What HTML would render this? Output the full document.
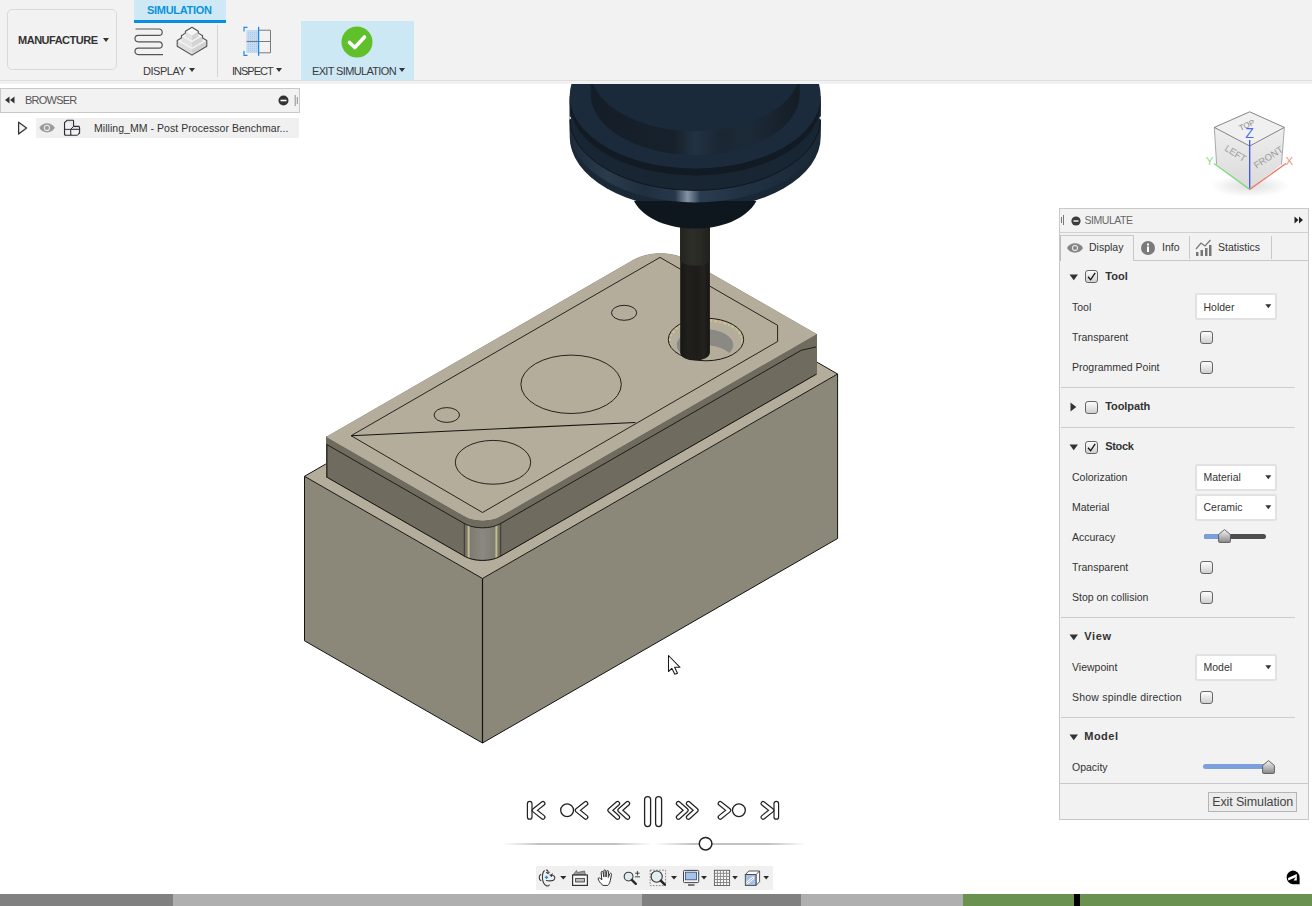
<!DOCTYPE html>
<html><head><meta charset="utf-8">
<style>
*{margin:0;padding:0;box-sizing:border-box}
html,body{width:1312px;height:906px;overflow:hidden;background:#fff;font-family:"Liberation Sans",sans-serif;color:#3c3c3c}
.abs{position:absolute}
#tb{position:absolute;left:0;top:0;width:1312px;height:81px;background:#f2f2f2;border-bottom:1px solid #dadada}
.lbl{position:absolute;font-size:10.5px;color:#3a3a3a;white-space:nowrap;letter-spacing:0}
.tri{position:absolute;width:0;height:0;border-left:3px solid transparent;border-right:3px solid transparent;border-top:4px solid #333}
#browser{position:absolute;left:0;top:88px;width:300px;height:25px;background:#f2f2f2;border:1px solid #c9c9c9}
#panel{position:absolute;left:1059px;top:209px;width:250px;height:611px;background:#f2f2f2;border:1px solid #c8c8c8}
.pl{position:absolute;font-size:11px;color:#3a3a3a;white-space:nowrap}
.pb{position:absolute;font-size:11px;font-weight:bold;color:#333;white-space:nowrap}
.cb{position:absolute;width:13px;height:13px;border:1px solid #666;border-radius:3px;background:linear-gradient(#fdfdfd,#cfcfcf)}
.dd{position:absolute;width:81px;height:27px;background:#fff;border:1px solid #dcdcdc}
.dd span{position:absolute;left:7px;top:7px;font-size:11px;color:#333}
.dd i{position:absolute;right:7px;top:11px;width:0;height:0;border-left:3px solid transparent;border-right:3px solid transparent;border-top:4px solid #333}
.sep{position:absolute;left:1px;width:234px;height:1px;background:#cfcfcf}
</style></head><body>
<svg class="abs" style="left:0;top:0" width="1312" height="906" viewBox="0 0 1312 906"><polygon points="304.5,476.3 482.5,578.5 482.5,743.0 304.5,640.8" fill="#8b8779"/>
<polygon points="482.5,578.5 837.6,374.0 837.6,538.5 482.5,743.0" fill="#8b8779"/>
<polygon points="482.5,578.5 837.6,374.0 659.6,271.7 304.5,476.3" fill="#b4ad9c"/>
<polyline points="304.5,476.3 482.5,578.5 837.6,374.0" fill="none" stroke="#141410" stroke-width="1"/>
<polyline points="304.5,476.3 304.5,640.8 482.5,743.0 837.6,538.5 837.6,374.0" fill="none" stroke="#141410" stroke-width="1"/>
<line x1="482.5" y1="578.5" x2="482.5" y2="743.0" stroke="#141410" stroke-width="1.2"/>
<polyline points="304.5,476.3 325.8,464.0" fill="none" stroke="#141410" stroke-width="1"/>
<polyline points="837.6,374.0 815.3,361.2" fill="none" stroke="#141410" stroke-width="1"/>
<polygon points="464.3,556.1 466.2,557.1 468.2,557.9 470.4,558.7 472.7,559.3 475.0,559.8 477.5,560.1 480.0,560.3 482.5,560.4 485.0,560.3 487.5,560.1 490.0,559.8 492.3,559.3 494.6,558.7 496.8,557.9 498.8,557.0 500.7,556.1 815.8,374.5 815.9,374.5 815.9,374.5 816.0,374.4 816.0,374.4 816.0,374.3 816.0,374.3 816.0,374.3 816.0,374.2 816.0,374.2 816.0,374.1 816.0,374.1 816.0,374.1 816.0,374.0 815.9,374.0 815.9,373.9 815.8,373.9 687.3,300.1 684.6,298.7 681.6,297.4 678.4,296.3 675.0,295.4 671.5,294.6 667.9,294.1 664.2,293.8 660.5,293.7 656.7,293.8 653.1,294.1 649.4,294.7 645.9,295.4 642.6,296.3 639.4,297.4 636.4,298.7 633.6,300.1 327.1,476.7 327.1,476.7 327.0,476.8 327.0,476.8 327.0,476.8 327.0,476.9 326.9,476.9 326.9,477.0 326.9,477.0 326.9,477.0 326.9,477.1 327.0,477.1 327.0,477.2 327.0,477.2 327.0,477.2 327.1,477.3 327.1,477.3" fill="#6f6b5f"/>
<polygon points="464.3,556.1 466.2,557.1 466.2,517.1 464.3,516.1" fill="#6f6b5f" stroke="#6f6b5f" stroke-width="0.6"/>
<polygon points="466.2,557.1 468.2,557.9 468.2,517.9 466.2,517.1" fill="#6f6b5f" stroke="#6f6b5f" stroke-width="0.6"/>
<polygon points="468.2,557.9 470.4,558.7 470.4,518.7 468.2,517.9" fill="#6f6b5f" stroke="#6f6b5f" stroke-width="0.6"/>
<polygon points="470.4,558.7 472.7,559.3 472.7,519.3 470.4,518.7" fill="#6f6b5f" stroke="#6f6b5f" stroke-width="0.6"/>
<polygon points="472.7,559.3 475.0,559.8 475.0,519.8 472.7,519.3" fill="#6f6b5f" stroke="#6f6b5f" stroke-width="0.6"/>
<polygon points="475.0,559.8 477.5,560.1 477.5,520.1 475.0,519.8" fill="#6f6b5f" stroke="#6f6b5f" stroke-width="0.6"/>
<polygon points="477.5,560.1 480.0,560.3 480.0,520.3 477.5,520.1" fill="#6f6b5f" stroke="#6f6b5f" stroke-width="0.6"/>
<polygon points="480.0,560.3 482.5,560.4 482.5,520.4 480.0,520.3" fill="#6f6b5f" stroke="#6f6b5f" stroke-width="0.6"/>
<polygon points="482.5,560.4 485.0,560.3 485.0,520.3 482.5,520.4" fill="#6f6b5f" stroke="#6f6b5f" stroke-width="0.6"/>
<polygon points="485.0,560.3 487.5,560.1 487.5,520.1 485.0,520.3" fill="#6f6b5f" stroke="#6f6b5f" stroke-width="0.6"/>
<polygon points="487.5,560.1 490.0,559.8 490.0,519.8 487.5,520.1" fill="#6f6b5f" stroke="#6f6b5f" stroke-width="0.6"/>
<polygon points="490.0,559.8 492.3,559.3 492.3,519.3 490.0,519.8" fill="#6f6b5f" stroke="#6f6b5f" stroke-width="0.6"/>
<polygon points="492.3,559.3 494.6,558.7 494.6,518.7 492.3,519.3" fill="#6f6b5f" stroke="#6f6b5f" stroke-width="0.6"/>
<polygon points="494.6,558.7 496.8,557.9 496.8,517.9 494.6,518.7" fill="#6f6b5f" stroke="#6f6b5f" stroke-width="0.6"/>
<polygon points="496.8,557.9 498.8,557.0 498.8,517.0 496.8,517.9" fill="#6f6b5f" stroke="#6f6b5f" stroke-width="0.6"/>
<polygon points="498.8,557.0 500.7,556.1 500.7,516.1 498.8,517.0" fill="#6f6b5f" stroke="#6f6b5f" stroke-width="0.6"/>
<polygon points="500.7,556.1 815.8,374.5 815.8,334.5 500.7,516.1" fill="#6f6b5f" stroke="#6f6b5f" stroke-width="0.6"/>
<polygon points="815.8,374.5 815.9,374.5 815.9,334.5 815.8,334.5" fill="#6f6b5f" stroke="#6f6b5f" stroke-width="0.6"/>
<polygon points="815.9,374.5 815.9,374.5 815.9,334.5 815.9,334.5" fill="#6f6b5f" stroke="#6f6b5f" stroke-width="0.6"/>
<polygon points="815.9,374.5 816.0,374.4 816.0,334.4 815.9,334.5" fill="#6f6b5f" stroke="#6f6b5f" stroke-width="0.6"/>
<polygon points="816.0,374.4 816.0,374.4 816.0,334.4 816.0,334.4" fill="#6f6b5f" stroke="#6f6b5f" stroke-width="0.6"/>
<polygon points="816.0,374.4 816.0,374.3 816.0,334.3 816.0,334.4" fill="#6f6b5f" stroke="#6f6b5f" stroke-width="0.6"/>
<polygon points="816.0,374.3 816.0,374.3 816.0,334.3 816.0,334.3" fill="#6f6b5f" stroke="#6f6b5f" stroke-width="0.6"/>
<polygon points="816.0,374.3 816.0,374.3 816.0,334.3 816.0,334.3" fill="#6f6b5f" stroke="#6f6b5f" stroke-width="0.6"/>
<polygon points="816.0,374.3 816.0,374.2 816.0,334.2 816.0,334.3" fill="#6f6b5f" stroke="#6f6b5f" stroke-width="0.6"/>
<polygon points="816.0,374.2 816.0,374.2 816.0,334.2 816.0,334.2" fill="#6f6b5f" stroke="#6f6b5f" stroke-width="0.6"/>
<polygon points="816.0,374.2 816.0,374.1 816.0,334.1 816.0,334.2" fill="#6f6b5f" stroke="#6f6b5f" stroke-width="0.6"/>
<polygon points="816.0,374.1 816.0,374.1 816.0,334.1 816.0,334.1" fill="#6f6b5f" stroke="#6f6b5f" stroke-width="0.6"/>
<polygon points="816.0,374.1 816.0,374.1 816.0,334.1 816.0,334.1" fill="#6f6b5f" stroke="#6f6b5f" stroke-width="0.6"/>
<polygon points="816.0,374.1 816.0,374.0 816.0,334.0 816.0,334.1" fill="#6f6b5f" stroke="#6f6b5f" stroke-width="0.6"/>
<polygon points="816.0,374.0 815.9,374.0 815.9,334.0 816.0,334.0" fill="#6f6b5f" stroke="#6f6b5f" stroke-width="0.6"/>
<polygon points="815.9,374.0 815.9,373.9 815.9,333.9 815.9,334.0" fill="#6f6b5f" stroke="#6f6b5f" stroke-width="0.6"/>
<polygon points="815.9,373.9 815.8,373.9 815.8,333.9 815.9,333.9" fill="#6f6b5f" stroke="#6f6b5f" stroke-width="0.6"/>
<polygon points="815.8,373.9 687.3,300.1 687.3,260.1 815.8,333.9" fill="#6f6b5f" stroke="#6f6b5f" stroke-width="0.6"/>
<polygon points="687.3,300.1 684.6,298.7 684.6,258.7 687.3,260.1" fill="#6f6b5f" stroke="#6f6b5f" stroke-width="0.6"/>
<polygon points="684.6,298.7 681.6,297.4 681.6,257.4 684.6,258.7" fill="#6f6b5f" stroke="#6f6b5f" stroke-width="0.6"/>
<polygon points="681.6,297.4 678.4,296.3 678.4,256.3 681.6,257.4" fill="#6f6b5f" stroke="#6f6b5f" stroke-width="0.6"/>
<polygon points="678.4,296.3 675.0,295.4 675.0,255.4 678.4,256.3" fill="#6f6b5f" stroke="#6f6b5f" stroke-width="0.6"/>
<polygon points="675.0,295.4 671.5,294.6 671.5,254.6 675.0,255.4" fill="#6f6b5f" stroke="#6f6b5f" stroke-width="0.6"/>
<polygon points="671.5,294.6 667.9,294.1 667.9,254.1 671.5,254.6" fill="#6f6b5f" stroke="#6f6b5f" stroke-width="0.6"/>
<polygon points="667.9,294.1 664.2,293.8 664.2,253.8 667.9,254.1" fill="#6f6b5f" stroke="#6f6b5f" stroke-width="0.6"/>
<polygon points="664.2,293.8 660.5,293.7 660.5,253.7 664.2,253.8" fill="#6f6b5f" stroke="#6f6b5f" stroke-width="0.6"/>
<polygon points="660.5,293.7 656.7,293.8 656.7,253.8 660.5,253.7" fill="#6f6b5f" stroke="#6f6b5f" stroke-width="0.6"/>
<polygon points="656.7,293.8 653.1,294.1 653.1,254.1 656.7,253.8" fill="#6f6b5f" stroke="#6f6b5f" stroke-width="0.6"/>
<polygon points="653.1,294.1 649.4,294.7 649.4,254.7 653.1,254.1" fill="#6f6b5f" stroke="#6f6b5f" stroke-width="0.6"/>
<polygon points="649.4,294.7 645.9,295.4 645.9,255.4 649.4,254.7" fill="#6f6b5f" stroke="#6f6b5f" stroke-width="0.6"/>
<polygon points="645.9,295.4 642.6,296.3 642.6,256.3 645.9,255.4" fill="#6f6b5f" stroke="#6f6b5f" stroke-width="0.6"/>
<polygon points="642.6,296.3 639.4,297.4 639.4,257.4 642.6,256.3" fill="#6f6b5f" stroke="#6f6b5f" stroke-width="0.6"/>
<polygon points="639.4,297.4 636.4,298.7 636.4,258.7 639.4,257.4" fill="#6f6b5f" stroke="#6f6b5f" stroke-width="0.6"/>
<polygon points="636.4,298.7 633.6,300.1 633.6,260.1 636.4,258.7" fill="#6f6b5f" stroke="#6f6b5f" stroke-width="0.6"/>
<polygon points="633.6,300.1 327.1,476.7 327.1,436.7 633.6,260.1" fill="#6f6b5f" stroke="#6f6b5f" stroke-width="0.6"/>
<polygon points="327.1,476.7 327.1,476.7 327.1,436.7 327.1,436.7" fill="#6f6b5f" stroke="#6f6b5f" stroke-width="0.6"/>
<polygon points="327.1,476.7 327.0,476.8 327.0,436.8 327.1,436.7" fill="#6f6b5f" stroke="#6f6b5f" stroke-width="0.6"/>
<polygon points="327.0,476.8 327.0,476.8 327.0,436.8 327.0,436.8" fill="#6f6b5f" stroke="#6f6b5f" stroke-width="0.6"/>
<polygon points="327.0,476.8 327.0,476.8 327.0,436.8 327.0,436.8" fill="#6f6b5f" stroke="#6f6b5f" stroke-width="0.6"/>
<polygon points="327.0,476.8 327.0,476.9 327.0,436.9 327.0,436.8" fill="#6f6b5f" stroke="#6f6b5f" stroke-width="0.6"/>
<polygon points="327.0,476.9 326.9,476.9 326.9,436.9 327.0,436.9" fill="#6f6b5f" stroke="#6f6b5f" stroke-width="0.6"/>
<polygon points="326.9,476.9 326.9,477.0 326.9,437.0 326.9,436.9" fill="#6f6b5f" stroke="#6f6b5f" stroke-width="0.6"/>
<polygon points="326.9,477.0 326.9,477.0 326.9,437.0 326.9,437.0" fill="#6f6b5f" stroke="#6f6b5f" stroke-width="0.6"/>
<polygon points="326.9,477.0 326.9,477.0 326.9,437.0 326.9,437.0" fill="#6f6b5f" stroke="#6f6b5f" stroke-width="0.6"/>
<polygon points="326.9,477.0 326.9,477.1 326.9,437.1 326.9,437.0" fill="#6f6b5f" stroke="#6f6b5f" stroke-width="0.6"/>
<polygon points="326.9,477.1 327.0,477.1 327.0,437.1 326.9,437.1" fill="#6f6b5f" stroke="#6f6b5f" stroke-width="0.6"/>
<polygon points="327.0,477.1 327.0,477.2 327.0,437.2 327.0,437.1" fill="#6f6b5f" stroke="#6f6b5f" stroke-width="0.6"/>
<polygon points="327.0,477.2 327.0,477.2 327.0,437.2 327.0,437.2" fill="#6f6b5f" stroke="#6f6b5f" stroke-width="0.6"/>
<polygon points="327.0,477.2 327.0,477.2 327.0,437.2 327.0,437.2" fill="#6f6b5f" stroke="#6f6b5f" stroke-width="0.6"/>
<polygon points="327.0,477.2 327.1,477.3 327.1,437.3 327.0,437.2" fill="#6f6b5f" stroke="#6f6b5f" stroke-width="0.6"/>
<polygon points="327.1,477.3 327.1,477.3 327.1,437.3 327.1,437.3" fill="#6f6b5f" stroke="#6f6b5f" stroke-width="0.6"/>
<polygon points="327.1,477.3 464.3,556.1 464.3,516.1 327.1,437.3" fill="#6f6b5f" stroke="#6f6b5f" stroke-width="0.6"/>
<polygon points="464.3,516.1 466.2,517.1 468.2,517.9 470.4,518.7 472.7,519.3 475.0,519.8 477.5,520.1 480.0,520.3 482.5,520.4 485.0,520.3 487.5,520.1 490.0,519.8 492.3,519.3 494.6,518.7 496.8,517.9 498.8,517.0 500.7,516.1 815.8,334.5 815.9,334.5 815.9,334.5 816.0,334.4 816.0,334.4 816.0,334.3 816.0,334.3 816.0,334.3 816.0,334.2 816.0,334.2 816.0,334.1 816.0,334.1 816.0,334.1 816.0,334.0 815.9,334.0 815.9,333.9 815.8,333.9 687.3,260.1 684.6,258.7 681.6,257.4 678.4,256.3 675.0,255.4 671.5,254.6 667.9,254.1 664.2,253.8 660.5,253.7 656.7,253.8 653.1,254.1 649.4,254.7 645.9,255.4 642.6,256.3 639.4,257.4 636.4,258.7 633.6,260.1 327.1,436.7 327.1,436.7 327.0,436.8 327.0,436.8 327.0,436.8 327.0,436.9 326.9,436.9 326.9,437.0 326.9,437.0 326.9,437.0 326.9,437.1 327.0,437.1 327.0,437.2 327.0,437.2 327.0,437.2 327.1,437.3 327.1,437.3" fill="#b4ad9c"/>
<defs><linearGradient id="cyl" x1="0" x2="1" y1="0" y2="0"><stop offset="0" stop-color="#6f6d62"/><stop offset="0.07" stop-color="#77756a"/><stop offset="0.12" stop-color="#c9c48e"/><stop offset="0.17" stop-color="#7e7c72"/><stop offset="0.5" stop-color="#8a8880"/><stop offset="0.83" stop-color="#7e7c72"/><stop offset="0.88" stop-color="#c9c48e"/><stop offset="0.93" stop-color="#77756a"/><stop offset="1" stop-color="#6f6d62"/></linearGradient></defs>
<polygon points="464.3,523.5 466.2,524.5 468.2,525.3 470.4,526.1 472.7,526.7 475.0,527.2 477.5,527.5 480.0,527.7 482.5,527.8 485.0,527.7 487.5,527.5 490.0,527.2 492.3,526.7 494.6,526.1 496.8,525.3 498.8,524.4 500.7,523.5 500.7,556.1 498.8,557.0 496.8,557.9 494.6,558.7 492.3,559.3 490.0,559.8 487.5,560.1 485.0,560.3 482.5,560.4 480.0,560.3 477.5,560.1 475.0,559.8 472.7,559.3 470.4,558.7 468.2,557.9 466.2,557.1 464.3,556.1" fill="url(#cyl)"/>
<line x1="464.3" y1="523.5" x2="464.3" y2="556.1" stroke="#3a382f" stroke-width="1"/>
<line x1="500.7" y1="523.5" x2="500.7" y2="556.1" stroke="#3a382f" stroke-width="1"/>
<polyline points="326.9,477.0 326.9,477.0 326.9,477.1 327.0,477.1 327.0,477.2 327.0,477.2 327.0,477.2 327.1,477.3 327.1,477.3 464.3,556.1 466.2,557.1 468.2,557.9 470.4,558.7 472.7,559.3 475.0,559.8 477.5,560.1 480.0,560.3 482.5,560.4 485.0,560.3 487.5,560.1 490.0,559.8 492.3,559.3 494.6,558.7 496.8,557.9 498.8,557.0 500.7,556.1 815.8,374.5 815.9,374.5 815.9,374.5 816.0,374.4 816.0,374.4 816.0,374.3 816.0,374.3 816.0,374.3 816.0,374.2" fill="none" stroke="#141410" stroke-width="1"/>
<polyline points="326.9,444.4 326.9,444.4 326.9,444.5 327.0,444.5 327.0,444.6 327.0,444.6 327.0,444.6 327.1,444.7 327.1,444.7 464.3,523.5 466.2,524.5 468.2,525.3 470.4,526.1 472.7,526.7 475.0,527.2 477.5,527.5 480.0,527.7 482.5,527.8 485.0,527.7 487.5,527.5 490.0,527.2 492.3,526.7 494.6,526.1 496.8,525.3 498.8,524.4 500.7,523.5 801.2,350.3 815.8,347.0 815.9,347.0 815.9,347.0 816.0,347.0 816.0,347.0 816.0,346.9 816.0,346.9 816.0,346.9 816.0,346.9" fill="none" stroke="#141410" stroke-width="0.9"/>
<line x1="326.9" y1="477.0" x2="326.9" y2="444.4" stroke="#141410" stroke-width="1"/>
<polygon points="464.3,516.1 466.2,517.1 468.2,517.9 470.4,518.7 472.7,519.3 475.0,519.8 477.5,520.1 480.0,520.3 482.5,520.4 485.0,520.3 487.5,520.1 490.0,519.8 492.3,519.3 494.6,518.7 496.8,517.9 498.8,517.0 500.7,516.1 815.8,334.5 815.9,334.5 815.9,334.5 816.0,334.4 816.0,334.4 816.0,334.3 816.0,334.3 816.0,334.3 816.0,334.2 816.0,334.2 816.0,334.1 816.0,334.1 816.0,334.1 816.0,334.0 815.9,334.0 815.9,333.9 815.8,333.9 687.3,260.1 684.6,258.7 681.6,257.4 678.4,256.3 675.0,255.4 671.5,254.6 667.9,254.1 664.2,253.8 660.5,253.7 656.7,253.8 653.1,254.1 649.4,254.7 645.9,255.4 642.6,256.3 639.4,257.4 636.4,258.7 633.6,260.1 327.1,436.7 327.1,436.7 327.0,436.8 327.0,436.8 327.0,436.8 327.0,436.9 326.9,436.9 326.9,437.0 326.9,437.0 326.9,437.0 326.9,437.1 327.0,437.1 327.0,437.2 327.0,437.2 327.0,437.2 327.1,437.3 327.1,437.3" fill="#b4ad9c"/>
<polygon points="482.5,512.5 777.6,341.5 777.6,325.3 660.0,257.4 351.1,435.7" fill="none" stroke="#141410" stroke-width="0.9"/>
<line x1="351.1" y1="435.7" x2="635.4" y2="422.5" stroke="#141410" stroke-width="1.1"/>
<ellipse cx="446.8" cy="415" rx="12.7" ry="7.4" fill="none" stroke="#141410" stroke-width="0.9"/>
<ellipse cx="571.1" cy="384.3" rx="50.2" ry="29.2" fill="none" stroke="#141410" stroke-width="0.9"/>
<ellipse cx="493" cy="462.3" rx="37.7" ry="21.9" fill="none" stroke="#141410" stroke-width="0.9"/>
<ellipse cx="624.1" cy="312.8" rx="12.6" ry="7.5" fill="none" stroke="#141410" stroke-width="0.9"/>
<defs><clipPath id="e1"><ellipse cx="705" cy="345" rx="28.5" ry="16"/></clipPath><clipPath id="eo"><ellipse cx="706" cy="339.5" rx="37.7" ry="21.3"/></clipPath></defs>
<ellipse cx="706" cy="339.5" rx="37.7" ry="21.3" fill="#b4ad9c"/>
<g clip-path="url(#eo)"><ellipse cx="706" cy="340.6" rx="36.4" ry="20.2" fill="none" stroke="#c9c290" stroke-width="2.6" stroke-dasharray="3,2,2,2"/></g>
<g clip-path="url(#eo)"><ellipse cx="706" cy="342.6" rx="35.2" ry="18.8" fill="#b4ad9c"/></g>
<g clip-path="url(#e1)"><ellipse cx="705" cy="345" rx="28.5" ry="16" fill="#8b8983"/><ellipse cx="705" cy="361.3" rx="28.5" ry="16" fill="#b4ad9c"/></g>
<ellipse cx="706" cy="339.5" rx="37.7" ry="21.3" fill="none" stroke="#1c1a14" stroke-width="1"/>
<defs><linearGradient id="shaft" x1="0" x2="1"><stop offset="0" stop-color="#181714"/><stop offset="0.25" stop-color="#201f1b"/><stop offset="0.55" stop-color="#1d1c18"/><stop offset="0.8" stop-color="#23221e"/><stop offset="1" stop-color="#161512"/></linearGradient><linearGradient id="shaft2" x1="0" x2="1"><stop offset="0" stop-color="#232320"/><stop offset="0.4" stop-color="#2e2e29"/><stop offset="0.7" stop-color="#2a2a25"/><stop offset="1" stop-color="#20201c"/></linearGradient></defs>
<path d="M 680.2 226 L 680.2 352.5 A 14.85 8 0 0 0 709.9 352.5 L 709.9 226 Z" fill="url(#shaft)"/>
<path d="M 680.2 226 L 680.2 259.7 A 14.85 6 0 0 0 709.9 259.7 L 709.9 226 Z" fill="url(#shaft2)"/>
<defs><linearGradient id="hl" x1="0" x2="1"><stop offset="0" stop-color="#1c2b3a"/><stop offset="0.15" stop-color="#2a3b4c"/><stop offset="0.3" stop-color="#1f2f40"/><stop offset="0.42" stop-color="#26384a"/><stop offset="0.47" stop-color="#8594a4"/><stop offset="0.52" stop-color="#2a3c50"/><stop offset="0.7" stop-color="#203142"/><stop offset="1" stop-color="#1a2836"/></linearGradient><linearGradient id="wl" x1="0" x2="1"><stop offset="0" stop-color="#151e28"/><stop offset="0.4" stop-color="#17212b"/><stop offset="0.5" stop-color="#223244"/><stop offset="0.62" stop-color="#1a2632"/><stop offset="0.75" stop-color="#1c2a38"/><stop offset="1" stop-color="#141d26"/></linearGradient><clipPath id="vp"><rect x="0" y="84" width="1312" height="822"/></clipPath></defs>
<g clip-path="url(#vp)">
<path d="M 569.7 96 L 569.7 137 A 125.5 72.4 0 0 0 820.7 137 L 820.7 96 Z" fill="#1a2735"/>
<path d="M 634 201 C 644 220 670 228.6 695.2 228.6 C 720 228.6 746 220 756.4 201 Z" fill="#0f171e"/>
<path d="M 569.7 118 A 125.5 72.4 0 0 0 820.7 118 L 820.7 130 A 125.5 72.4 0 0 1 569.7 130 Z" fill="url(#hl)"/>
<path d="M 569.7 96 A 125.5 72.4 0 0 0 820.7 96 L 820.7 118 A 125.5 72.4 0 0 1 569.7 118 Z" fill="#182533"/>
<path d="M 569.7 96 A 125.5 72.4 0 0 0 820.7 96 L 820.7 103 A 125.5 72.4 0 0 1 569.7 103 Z" fill="#121b24"/>
<path d="M 569.7 118 A 125.5 72.4 0 0 0 820.7 118" fill="none" stroke="#0c1218" stroke-width="0.8"/>
<ellipse cx="695.2" cy="96" rx="125.5" ry="72.4" fill="#1c2b3b"/>
<path d="M 590.7 70.7 A 104.5 60.3 0 0 0 799.7 70.7 L 799.7 94.7 A 104.5 60.3 0 0 1 590.7 94.7 Z" fill="url(#wl)"/>
<ellipse cx="695.2" cy="70.7" rx="104.5" ry="60.3" fill="#1b2a3a"/>
<path d="M 569.5 116 L 571.2 118 L 569.5 120 Z M 820.9 116 L 819.2 118 L 820.9 120 Z" fill="#fff"/>
</g>
</svg>
<div id="tb"></div>
<!-- toolbar -->
<div class="abs" style="left:0;top:80px;width:1312px;height:1px;background:#dedede"></div>
<div class="abs" style="left:0;top:81px;width:1312px;height:3px;background:#f2f2f2"></div>
<div class="abs" style="left:7px;top:9px;width:110px;height:61px;border:1px solid #d9d9d9;border-radius:5px;background:#f2f2f2"></div>
<div class="abs" style="left:18px;top:34.69px;font-size:11px;line-height:11px;letter-spacing:-0.49px;color:#333;white-space:nowrap;font-weight:bold">MANUFACTURE</div>
<div class="tri" style="left:103px;top:38px"></div>
<div class="abs" style="left:134px;top:0;width:92px;height:20px;background:#cfe8f6"></div>
<div class="abs" style="left:134px;top:20px;width:92px;height:3px;background:#0a8fdc"></div>
<div class="abs" style="left:147px;top:4.69px;font-size:11px;line-height:11px;letter-spacing:-0.3px;color:#0b93d8;white-space:nowrap;font-weight:bold">SIMULATION</div>
<svg class="abs" style="left:130px;top:22px" width="85" height="38" viewBox="130 22 85 38">
 <path d="M135.5 29 H159 A3.2 3.2 0 0 1 159 35.4 H138.2 A3.2 3.2 0 0 0 138.2 41.8 H159 A3.2 3.2 0 0 1 159 48.2 H138.2 A3.2 3.2 0 0 0 138.2 54.6 H163" fill="none" stroke="#555" stroke-width="1.2"/>
 <path d="M177.2 40.6 L192 49 L206.8 40.6 L206.8 46.3 L192 55.1 L177.2 46.3 Z" fill="#dedede"/>
 <path d="M192 49 L206.8 40.6 L206.8 46.3 L192 55.1 Z" fill="#d2d2d2"/>
 <path d="M177.2 40.6 L192 32 L206.8 40.6 L192 49 Z" fill="#f4f4f4"/>
 <path d="M181.4 36 L192 42.2 L202.6 36 L202.6 38.3 L192 44.5 L181.4 38.3 Z" fill="#e0e0e0"/>
 <path d="M181.4 36 L192 29.8 L202.6 36 L192 42.2 Z" fill="#f4f4f4"/>
 <path d="M181.4 36 L192 42.2 L192 47.6 L181.4 41.4 Z" fill="#e2e2e2"/>
 <path d="M192 42.2 L202.6 36 L202.6 41.4 L192 47.6 Z" fill="#d4d4d4"/>
 <path d="M185.4 31.2 L192 35.2 L192 40.7 L185.4 36.8 Z" fill="#e2e2e2"/>
 <path d="M192 35.2 L198.4 31.2 L198.4 36.8 L192 40.7 Z" fill="#d4d4d4"/>
 <path d="M185.4 31.2 L192 27.2 L198.4 31.2 L192 35.2 Z" fill="#f6f6f6"/>
 <path d="M192 27.2 L198.4 31.2 L198.4 33.1 L202.6 35.8 L202.6 38.1 L206.8 40.4 L206.8 46.3 L192 55.1 L177.2 46.3 L177.2 40.4 L181.4 38.1 L181.4 35.8 L185.4 33.1 L185.4 31.2 Z" fill="none" stroke="#505050" stroke-width="1.1" stroke-linejoin="round"/>
</svg>
<div class="abs" style="left:143px;top:65.69px;font-size:11px;line-height:11px;letter-spacing:-0.45px;color:#3a3a3a;white-space:nowrap">DISPLAY</div>
<div class="tri" style="left:189px;top:68px"></div>
<div class="abs" style="left:217px;top:25px;width:1px;height:52px;background:#d4d4d4"></div>
<svg class="abs" style="left:240px;top:24px" width="36" height="36" viewBox="240 24 36 36">
 <defs><pattern id="dots" width="2" height="2" patternUnits="userSpaceOnUse"><rect width="2" height="2" fill="#c4dcf2"/><rect width="1" height="1" fill="#a9c9ea"/></pattern></defs>
 <rect x="246.5" y="30.2" width="12" height="22.6" fill="url(#dots)"/>
 <path d="M246.5 41.5 H270.5 M258.6 30.2 H270.5 V52.8 H258.6" fill="none" stroke="#7a7a7a" stroke-width="1"/>
 <path d="M247.5 27.3 H244 V31.5 M247.5 55.3 H244 V51" fill="none" stroke="#1e88e5" stroke-width="1.2"/>
 <path d="M258.6 26.8 V55.8" stroke="#1e88e5" stroke-width="1.3"/>
</svg>
<div class="abs" style="left:232px;top:65.69px;font-size:11px;line-height:11px;letter-spacing:-1.0px;color:#3a3a3a;white-space:nowrap">INSPECT</div>
<div class="tri" style="left:276px;top:68px"></div>
<div class="abs" style="left:301px;top:21px;width:113px;height:59px;background:#cde8f5"></div>
<svg class="abs" style="left:340px;top:26px" width="34" height="32" viewBox="0 0 34 32">
 <circle cx="17" cy="16" r="15.5" fill="#5fc02a"/>
 <path d="M9.5 16.5 L14.8 21.5 L24.5 11" fill="none" stroke="#fff" stroke-width="3.6" stroke-linecap="round" stroke-linejoin="round"/>
</svg>
<div class="abs" style="left:312px;top:65.69px;font-size:11px;line-height:11px;letter-spacing:-0.65px;color:#3a3a3a;white-space:nowrap">EXIT SIMULATION</div>
<div class="tri" style="left:399px;top:68px"></div>

<!-- browser -->
<div id="browser"></div>
<svg class="abs" style="left:4px;top:96px" width="12" height="8" viewBox="0 0 12 8"><path d="M1 4 L5.5 0.5 V7.5 Z M6 4 L10.5 0.5 V7.5 Z" fill="#333"/></svg>
<div class="abs" style="left:25px;top:95.19px;font-size:11px;line-height:11px;letter-spacing:-0.77px;color:#555;white-space:nowrap">BROWSER</div>
<svg class="abs" style="left:277px;top:94px" width="22" height="13" viewBox="0 0 22 13"><circle cx="6.5" cy="6.5" r="5" fill="#333"/><rect x="3.5" y="5.7" width="6" height="1.6" fill="#fff"/><path d="M18.2 1 V12 M20.3 3 V10" stroke="#777" stroke-width="0.8"/></svg>
<div class="abs" style="left:36px;top:118px;width:263px;height:20px;background:#f0f0f0"></div>
<svg class="abs" style="left:10px;top:114px" width="80" height="28" viewBox="10 114 80 28">
 <path d="M18.6 122.2 L26.6 128.1 L18.6 134.1 Z" fill="#f4f4f4" stroke="#333" stroke-width="1.25" stroke-linejoin="round"/>
 <path d="M39.3 127.8 C42.5 121.6 51.6 121.6 54.8 127.8 C51.6 134 42.5 134 39.3 127.8 Z" fill="#9b9b9b"/>
 <circle cx="46.9" cy="127.9" r="3.1" fill="#f0f0f0"/><circle cx="46.9" cy="127.9" r="2.1" fill="#9b9b9b"/>
 <path d="M64.5 122.6 L67 120.3 H73.2 L73.6 121.4 V126.4 H79.1 L79.6 128.1 V133 L77.2 135.1 H65 L64.5 134.6 Z" fill="#e4e4ea" stroke="#2e2e2e" stroke-width="1.1" stroke-linejoin="round"/>
 <path d="M70.7 135.1 V129.3 L73.6 126.4 M64.5 129.3 H70.7 M70.7 129.3 H79.6" fill="none" stroke="#2e2e2e" stroke-width="1"/>
 <path d="M66 123 H70.5 V128.5 H66 Z M66 130.5 H70 V134.5 H66 Z M72 130.5 H78 V134.5 H72 Z" fill="#f3f3f6"/>
</svg>
<div class="abs" style="left:94px;top:123.11px;font-size:10.5px;line-height:10.5px;letter-spacing:0.05px;color:#333;white-space:nowrap">Milling_MM - Post Processor Benchmar...</div>

<!-- viewcube -->
<svg class="abs" style="left:1190px;top:95px" width="122" height="105" viewBox="1190 95 122 105">
 <defs><radialGradient id="vcs" cx="0.5" cy="0.5" r="0.5"><stop offset="0" stop-color="#000" stop-opacity="0.13"/><stop offset="1" stop-color="#000" stop-opacity="0"/></radialGradient>
 <linearGradient id="vcl" x1="0" y1="0" x2="0" y2="1"><stop offset="0" stop-color="#f3f3f3"/><stop offset="1" stop-color="#dadada"/></linearGradient></defs>
 <ellipse cx="1250" cy="186" rx="40" ry="11" fill="url(#vcs)"/>
 <path d="M1214.3 127.4 L1249.7 111.8 L1284.4 127.4 L1281.5 164.5 L1249.7 189.4 L1216.6 164.5 Z" fill="url(#vcl)"/>
 <path d="M1214.3 127.4 L1249.7 111.8 L1284.4 127.4 L1249.7 146 Z" fill="#f0f0f0"/>
 <path d="M1214.3 127.4 L1249.7 111.8 L1284.4 127.4 L1249.7 146 Z" fill="none" stroke="#555" stroke-width="0.7"/>
 <path d="M1214.3 127.4 L1216.6 164.5 M1284.4 127.4 L1281.5 164.5" fill="none" stroke="#888" stroke-width="0.7"/>
 <text font-size="9.5" fill="#9a9a9a" transform="translate(1224 150) rotate(32)" font-family="Liberation Sans">LEFT</text>
 <text font-size="9.5" fill="#9a9a9a" transform="translate(1256.5 169) rotate(-33)" font-family="Liberation Sans">FRONT</text>
 <text font-size="8" fill="#8a8a8a" transform="translate(1240.5 131) rotate(-24)" font-family="Liberation Sans">TOP</text>
 <text x="1245.2" y="138" font-size="14" fill="#4b6cf0" font-family="Liberation Sans">Z</text>
 <path d="M1249.7 140 V189.4" stroke="#3d52ee" stroke-width="1.3"/>
 <path d="M1249.7 189.4 L1214 163.5" stroke="#80d880" stroke-width="1.3"/>
 <path d="M1249.7 189.4 L1286 163.5" stroke="#f07866" stroke-width="1.3"/>
 <text x="1205.8" y="165" font-size="11.5" fill="#8ae08a" font-family="Liberation Sans">Y</text>
 <text x="1285.6" y="165" font-size="11.5" fill="#f0907e" font-family="Liberation Sans">X</text>
</svg>

<!-- simulate panel -->

<div class="abs" style="left:1059px;top:208px;width:250px;height:612px;background:#f2f2f2;border:1px solid #c9c9c9"></div>
<div class="abs" style="left:1060px;top:232px;width:248px;height:1px;background:#d0d0d0"></div>
<div class="abs" style="left:1061px;top:217px;width:1px;height:6px;background:#777"></div><div class="abs" style="left:1063px;top:215px;width:1px;height:10px;background:#777"></div>
<svg class="abs" style="left:1070.5px;top:215.5px" width="10" height="10" viewBox="0 0 10 10"><circle cx="5" cy="5" r="4.6" fill="#3a3a3a"/><rect x="2.5" y="4.3" width="5" height="1.4" fill="#fff"/></svg>
<div class="abs" style="left:1084.5px;top:214.91px;font-size:10.5px;line-height:10.5px;font-weight:normal;color:#666;white-space:nowrap;letter-spacing:-0.45px">SIMULATE</div>
<svg class="abs" style="left:1294px;top:216px" width="10" height="8" viewBox="0 0 10 8"><path d="M0.5 0.5 L4.5 4 L0.5 7.5 Z M5 0.5 L9 4 L5 7.5 Z" fill="#222"/></svg>
<div class="abs" style="left:1060px;top:260px;width:248px;height:1px;background:#c8c8c8"></div>
<div class="abs" style="left:1060px;top:235px;width:74px;height:26px;background:#f2f2f2;border:1px solid #c8c8c8;border-bottom:none;border-left-color:#bbb"></div>
<div class="abs" style="left:1189px;top:236px;width:1px;height:23px;background:#c8c8c8"></div>
<div class="abs" style="left:1271px;top:236px;width:1px;height:23px;background:#c8c8c8"></div>
<svg class="abs" style="left:1066px;top:242px" width="18" height="12" viewBox="0 0 18 12"><path d="M1 6 C4 -0.2 14 -0.2 17 6 C14 12.2 4 12.2 1 6 Z" fill="#858585"/><circle cx="9" cy="6" r="3" fill="#f2f2f2"/><circle cx="9" cy="6" r="2" fill="#858585"/></svg>
<div class="abs" style="left:1089px;top:242.21px;font-size:10.5px;line-height:10.5px;font-weight:normal;color:#333;white-space:nowrap;letter-spacing:0px">Display</div>
<svg class="abs" style="left:1140px;top:240px" width="16" height="16" viewBox="0 0 16 16"><circle cx="8" cy="8" r="7" fill="#7a7a7a"/><rect x="7" y="6.5" width="2" height="5.5" fill="#fff"/><rect x="7" y="3.5" width="2" height="2" fill="#fff"/></svg>
<div class="abs" style="left:1162px;top:242.21px;font-size:10.5px;line-height:10.5px;font-weight:normal;color:#333;white-space:nowrap;letter-spacing:0px">Info</div>
<svg class="abs" style="left:1195px;top:239px" width="17" height="18" viewBox="0 0 17 18"><path d="M1 17 V13 H3.5 V17 Z M5.5 17 V11 H8 V17 Z M10 17 V9 H12.5 V17 Z M14 17 V6 H16.5 V17 Z" fill="#777"/><path d="M1 10 L6 4 L10 7 L15.5 1" fill="none" stroke="#777" stroke-width="1.2"/></svg>
<div class="abs" style="left:1218px;top:242.21px;font-size:10.5px;line-height:10.5px;font-weight:normal;color:#333;white-space:nowrap;letter-spacing:0px">Statistics</div>
<svg class="abs" style="left:1069px;top:273.5px" width="10" height="7" viewBox="0 0 10 7"><path d="M0.5 0.5 H9 L4.75 6.3 Z" fill="#333"/></svg>
<div class="cb" style="left:1085px;top:269.5px"></div>
<svg class="abs" style="left:1085px;top:269.5px" width="13" height="13" viewBox="0 0 13 13"><path d="M3 6.8 L5.6 9.8 L10.2 2.8" fill="none" stroke="#111" stroke-width="1.3"/></svg>
<div class="abs" style="left:1105.3px;top:271.49px;font-size:11px;line-height:11px;font-weight:bold;color:#333;white-space:nowrap;letter-spacing:0px">Tool</div>
<div class="abs" style="left:1072px;top:302.01px;font-size:10.5px;line-height:10.5px;font-weight:normal;color:#333;white-space:nowrap;letter-spacing:0px">Tool</div>
<div class="abs" style="left:1195px;top:293.1px;width:82px;height:27px;background:#fff;border:2px solid #e2e2e2;border-radius:2px"></div>
<div class="abs" style="left:1203.5px;top:301.71px;font-size:10.5px;line-height:10.5px;font-weight:normal;color:#333;white-space:nowrap;letter-spacing:0px">Holder</div>
<svg class="abs" style="left:1265px;top:304.1px" width="7" height="5" viewBox="0 0 7 5"><path d="M0.3 0.3 H6.3 L3.3 4.3 Z" fill="#333"/></svg>
<div class="abs" style="left:1072px;top:332.01px;font-size:10.5px;line-height:10.5px;font-weight:normal;color:#333;white-space:nowrap;letter-spacing:0px">Transparent</div>
<div class="cb" style="left:1200px;top:330.5px"></div>
<div class="abs" style="left:1072px;top:362.01px;font-size:10.5px;line-height:10.5px;font-weight:normal;color:#333;white-space:nowrap;letter-spacing:0px">Programmed Point</div>
<div class="cb" style="left:1200px;top:360.5px"></div>
<div class="abs" style="left:1061px;top:387px;width:234px;height:1px;background:#cdcdcd"></div>
<svg class="abs" style="left:1070px;top:402px" width="7" height="10" viewBox="0 0 7 10"><path d="M0.5 0.5 V9.5 L6.3 5 Z" fill="#333"/></svg>
<div class="cb" style="left:1085px;top:400.5px"></div>
<div class="abs" style="left:1105.3px;top:401.49px;font-size:11px;line-height:11px;font-weight:bold;color:#333;white-space:nowrap;letter-spacing:-0.1px">Toolpath</div>
<div class="abs" style="left:1061px;top:427px;width:234px;height:1px;background:#cdcdcd"></div>
<svg class="abs" style="left:1069px;top:443.5px" width="10" height="7" viewBox="0 0 10 7"><path d="M0.5 0.5 H9 L4.75 6.3 Z" fill="#333"/></svg>
<div class="cb" style="left:1085px;top:440.5px"></div>
<svg class="abs" style="left:1085px;top:440.5px" width="13" height="13" viewBox="0 0 13 13"><path d="M3 6.8 L5.6 9.8 L10.2 2.8" fill="none" stroke="#111" stroke-width="1.3"/></svg>
<div class="abs" style="left:1105.3px;top:441.49px;font-size:11px;line-height:11px;font-weight:bold;color:#333;white-space:nowrap;letter-spacing:-0.37px">Stock</div>
<div class="abs" style="left:1072px;top:472.11px;font-size:10.5px;line-height:10.5px;font-weight:normal;color:#333;white-space:nowrap;letter-spacing:0px">Colorization</div>
<div class="abs" style="left:1195px;top:463.5px;width:82px;height:27px;background:#fff;border:2px solid #e2e2e2;border-radius:2px"></div>
<div class="abs" style="left:1203.5px;top:472.11px;font-size:10.5px;line-height:10.5px;font-weight:normal;color:#333;white-space:nowrap;letter-spacing:0px">Material</div>
<svg class="abs" style="left:1265px;top:474.5px" width="7" height="5" viewBox="0 0 7 5"><path d="M0.3 0.3 H6.3 L3.3 4.3 Z" fill="#333"/></svg>
<div class="abs" style="left:1072px;top:502.11px;font-size:10.5px;line-height:10.5px;font-weight:normal;color:#333;white-space:nowrap;letter-spacing:0px">Material</div>
<div class="abs" style="left:1195px;top:493.5px;width:82px;height:27px;background:#fff;border:2px solid #e2e2e2;border-radius:2px"></div>
<div class="abs" style="left:1203.5px;top:502.11px;font-size:10.5px;line-height:10.5px;font-weight:normal;color:#333;white-space:nowrap;letter-spacing:0px">Ceramic</div>
<svg class="abs" style="left:1265px;top:504.5px" width="7" height="5" viewBox="0 0 7 5"><path d="M0.3 0.3 H6.3 L3.3 4.3 Z" fill="#333"/></svg>
<div class="abs" style="left:1072px;top:532.11px;font-size:10.5px;line-height:10.5px;font-weight:normal;color:#333;white-space:nowrap;letter-spacing:0px">Accuracy</div>
<div class="abs" style="left:1204px;top:534px;width:62px;height:5px;border-radius:3px;background:#4d4d4d"></div>
<div class="abs" style="left:1204px;top:534px;width:20px;height:5px;border-radius:3px 0 0 3px;background:#7b9fdc"></div>
<svg class="abs" style="left:1218px;top:529px" width="14" height="14" viewBox="0 0 14 14"><defs><linearGradient id="hg" x1="0" y1="0" x2="0" y2="1"><stop offset="0" stop-color="#f5f5f5"/><stop offset="1" stop-color="#8a8a8a"/></linearGradient></defs><path d="M0.6 12.5 V5.5 L6.5 0.6 L12.4 5.5 V12.5 Q12.4 13.4 11.5 13.4 H1.5 Q0.6 13.4 0.6 12.5 Z" fill="url(#hg)" stroke="#555" stroke-width="0.9"/></svg>
<div class="abs" style="left:1072px;top:562.11px;font-size:10.5px;line-height:10.5px;font-weight:normal;color:#333;white-space:nowrap;letter-spacing:0px">Transparent</div>
<div class="cb" style="left:1200px;top:560.5px"></div>
<div class="abs" style="left:1072px;top:592.11px;font-size:10.5px;line-height:10.5px;font-weight:normal;color:#333;white-space:nowrap;letter-spacing:0px">Stop on collision</div>
<div class="cb" style="left:1200px;top:590.5px"></div>
<div class="abs" style="left:1061px;top:617px;width:234px;height:1px;background:#cdcdcd"></div>
<svg class="abs" style="left:1069px;top:633.5px" width="10" height="7" viewBox="0 0 10 7"><path d="M0.5 0.5 H9 L4.75 6.3 Z" fill="#333"/></svg>
<div class="abs" style="left:1084.3px;top:631.49px;font-size:11px;line-height:11px;font-weight:bold;color:#333;white-space:nowrap;letter-spacing:0.67px">View</div>
<div class="abs" style="left:1072px;top:662.11px;font-size:10.5px;line-height:10.5px;font-weight:normal;color:#333;white-space:nowrap;letter-spacing:0px">Viewpoint</div>
<div class="abs" style="left:1195px;top:653.5px;width:82px;height:27px;background:#fff;border:2px solid #e2e2e2;border-radius:2px"></div>
<div class="abs" style="left:1203.5px;top:662.11px;font-size:10.5px;line-height:10.5px;font-weight:normal;color:#333;white-space:nowrap;letter-spacing:0px">Model</div>
<svg class="abs" style="left:1265px;top:664.5px" width="7" height="5" viewBox="0 0 7 5"><path d="M0.3 0.3 H6.3 L3.3 4.3 Z" fill="#333"/></svg>
<div class="abs" style="left:1072px;top:692.11px;font-size:10.5px;line-height:10.5px;font-weight:normal;color:#333;white-space:nowrap;letter-spacing:0.22px">Show spindle direction</div>
<div class="cb" style="left:1200px;top:690.5px"></div>
<div class="abs" style="left:1061px;top:717px;width:234px;height:1px;background:#cdcdcd"></div>
<svg class="abs" style="left:1069px;top:733.5px" width="10" height="7" viewBox="0 0 10 7"><path d="M0.5 0.5 H9 L4.75 6.3 Z" fill="#333"/></svg>
<div class="abs" style="left:1084.3px;top:731.49px;font-size:11px;line-height:11px;font-weight:bold;color:#333;white-space:nowrap;letter-spacing:0.47px">Model</div>
<div class="abs" style="left:1072px;top:762.11px;font-size:10.5px;line-height:10.5px;font-weight:normal;color:#333;white-space:nowrap;letter-spacing:0px">Opacity</div>
<div class="abs" style="left:1203px;top:764px;width:65px;height:5px;border-radius:3px;background:#7b9fdc"></div>
<svg class="abs" style="left:1262px;top:760px" width="14" height="14" viewBox="0 0 14 14"><path d="M0.6 12.5 V5.5 L6.5 0.6 L12.4 5.5 V12.5 Q12.4 13.4 11.5 13.4 H1.5 Q0.6 13.4 0.6 12.5 Z" fill="url(#hg)" stroke="#555" stroke-width="0.9"/></svg>
<div class="abs" style="left:1060px;top:783px;width:248px;height:1px;background:#c8c8c8"></div>
<div class="abs" style="left:1208px;top:792px;width:89px;height:20px;background:#ececec;border:1px solid #b5b5b5"></div>
<div class="abs" style="left:1212.2px;top:796.42px;font-size:12.5px;line-height:12.5px;font-weight:normal;color:#444;white-space:nowrap;letter-spacing:-0.12px">Exit Simulation</div>
<!-- playback -->
<svg class="abs" style="left:0;top:780px" width="1312" height="126" viewBox="0 780 1312 126">
 <defs>
  <linearGradient id="sl" x1="0" x2="1"><stop offset="0" stop-color="#888" stop-opacity="0"/><stop offset="0.25" stop-color="#777" stop-opacity="0.9"/><stop offset="0.75" stop-color="#777" stop-opacity="0.9"/><stop offset="1" stop-color="#888" stop-opacity="0"/></linearGradient>
  <g id="lhalf">
   <!-- |< -->
   <rect x="527.4" y="801.4" width="4.6" height="17.8" rx="2.3" fill="#fff" stroke="#222" stroke-width="1.2"/>
   <path d="M542.9 803.5 L534.3 810.3 L542.9 817.2" fill="none" stroke="#222" stroke-width="5.2" stroke-linecap="round" stroke-linejoin="round"/>
   <path d="M542.9 803.5 L534.3 810.3 L542.9 817.2" fill="none" stroke="#fff" stroke-width="2.8" stroke-linecap="round" stroke-linejoin="round"/>
   <!-- O< -->
   <circle cx="567.1" cy="810.3" r="6.4" fill="#fff" stroke="#222" stroke-width="1.3"/>
   <path d="M585.8 803.5 L577.3 810.3 L585.8 817.2" fill="none" stroke="#222" stroke-width="5.2" stroke-linecap="round" stroke-linejoin="round"/>
   <path d="M585.8 803.5 L577.3 810.3 L585.8 817.2" fill="none" stroke="#fff" stroke-width="2.8" stroke-linecap="round" stroke-linejoin="round"/>
   <!-- << -->
   <path d="M617.6 803.5 L609.9 810.3 L617.6 817.2" fill="none" stroke="#222" stroke-width="5.2" stroke-linecap="round" stroke-linejoin="round"/>
   <path d="M617.6 803.5 L609.9 810.3 L617.6 817.2" fill="none" stroke="#fff" stroke-width="2.8" stroke-linecap="round" stroke-linejoin="round"/>
   <path d="M627.6 803.5 L619.9 810.3 L627.6 817.2" fill="none" stroke="#222" stroke-width="5.2" stroke-linecap="round" stroke-linejoin="round"/>
   <path d="M627.6 803.5 L619.9 810.3 L627.6 817.2" fill="none" stroke="#fff" stroke-width="2.8" stroke-linecap="round" stroke-linejoin="round"/>
  </g>
 </defs>
 <use href="#lhalf"/>
 <use href="#lhalf" transform="translate(1306 0) scale(-1 1)"/>
 <rect x="644.6" y="796.6" width="6" height="30" rx="3" fill="#fff" stroke="#222" stroke-width="1.3"/>
 <rect x="655.6" y="796.6" width="6" height="30" rx="3" fill="#fff" stroke="#222" stroke-width="1.3"/>
 <rect x="502" y="843.5" width="150" height="1" fill="url(#sl)"/>
 <rect x="654" y="843.5" width="153" height="1" fill="url(#sl)"/>
 <circle cx="705.6" cy="843.7" r="6.3" fill="#fff" stroke="#222" stroke-width="1.5"/>
 <!-- nav bar -->
 <rect x="536" y="866" width="237" height="24" fill="#f0f0f0"/>
 <!-- orbit -->
 <g fill="none" stroke="#3a3a3a" stroke-width="1.1">
  <path d="M544.6 870.5 C541.5 873 541.5 883 546 885.5 C548 886.6 549.5 885.6 549.2 884.5"/>
  <path d="M541.2 874.2 C538.5 875.5 538.5 879.5 541.2 880.8"/>
  <path d="M546 870.3 C547.5 869.8 548.2 871 548 872.5"/>
  <path d="M549.5 875 C554 874.5 555.6 877 554.5 879.2 C553.5 881 550 881.2 546 880.5"/>
  <path d="M546.2 872.2 L548 873.5 L549.5 871.8 M550.5 875.8 L551.8 874.5 L551.2 876.8"/>
 </g>
 <path d="M544.8 877.4 h3.4 M546.5 875.7 v3.4" stroke="#1a8fe0" stroke-width="1.2"/>
 <path d="M560.2 876 h6.2 l-3.1 3.6z" fill="#2a2a2a"/>
 <!-- look at -->
 <path d="M573 875 L576.5 870.5 L577.5 872.5 L584.5 871 L585.5 875 Z" fill="#9a9a9a" stroke="#555" stroke-width="0.7"/>
 <rect x="572.6" y="875" width="14.8" height="10.4" fill="#fbfbfb" stroke="#333" stroke-width="1.2"/>
 <rect x="575.6" y="878.4" width="8.8" height="3.6" fill="#b8bec2" stroke="#444" stroke-width="0.9"/>
 <!-- pan hand -->
 <path d="M603 885.4 C600 883 598.5 880.5 598.2 879 C598 877.6 599.6 877.4 600.6 878.6 L601.8 880 L601.2 872.5 C601.1 871.2 602.9 871 603.1 872.3 L603.8 877 L603.9 870.8 C603.9 869.6 605.8 869.6 605.8 870.8 L606 877 L606.8 871.4 C607 870.3 608.7 870.4 608.6 871.6 L608.3 877.4 L609.8 873.8 C610.3 872.8 611.8 873.2 611.5 874.4 L610.3 880.5 C609.8 883 608.7 884.6 607.8 885.4 Z" fill="#fff" stroke="#2e2e2e" stroke-width="1"/>
 <path d="M603.9 872 v5 M606 872 v5 M608.3 872.5 v4.5" stroke="#666" stroke-width="0.6"/>
 <!-- zoom + -->
 <circle cx="628.6" cy="876.6" r="4.4" fill="#dfecef" stroke="#3a3a3a" stroke-width="1.1"/>
 <path d="M631.8 879.8 L635.8 883.8" stroke="#2a2a2a" stroke-width="2.4" stroke-linecap="round"/>
 <path d="M637.4 871 v4.4 M635.2 873.2 h4.4 M635 876.8 h5" stroke="#333" stroke-width="0.9"/>
 <!-- fit -->
 <rect x="650.2" y="870.2" width="15.4" height="15.4" fill="none" stroke="#666" stroke-width="0.8" stroke-dasharray="1.6,1.4"/>
 <circle cx="656.7" cy="876.6" r="5.6" fill="#e2eef0" stroke="#333" stroke-width="1.1"/>
 <path d="M660.8 880.7 L664.8 884.6" stroke="#222" stroke-width="2.4" stroke-linecap="round"/>
 <path d="M671 876 h6 l-3 3.5z" fill="#2a2a2a"/>
 <!-- display -->
 <rect x="683.5" y="870.4" width="15.2" height="12.2" rx="1" fill="#f4f4f4" stroke="#444" stroke-width="1"/>
 <rect x="685.6" y="872.2" width="11" height="7.6" fill="#a9c3e6" stroke="#2a4a8a" stroke-width="0.8"/>
 <path d="M688 885 h6.5" stroke="#444" stroke-width="1.4"/>
 <path d="M701 876 h6 l-3 3.5z" fill="#2a2a2a"/>
 <!-- grid -->
 <rect x="714.4" y="870.3" width="15.2" height="15.2" fill="#fafafa" stroke="#555" stroke-width="0.9"/>
 <path d="M717.4 870.3 v15.2 M720.4 870.3 v15.2 M723.5 870.3 v15.2 M726.6 870.3 v15.2 M714.4 873.3 h15.2 M714.4 876.4 h15.2 M714.4 879.5 h15.2 M714.4 882.5 h15.2" stroke="#8a8a8a" stroke-width="1"/>
 <path d="M732.2 876 h5.6 l-2.8 3.4z" fill="#2a2a2a"/>
 <!-- viewports -->
 <path d="M745.3 874.6 L748.8 871 H759.6 V881.8 L756 885.4" fill="#fff" stroke="#444" stroke-width="0.9"/>
 <path d="M745.3 874.6 H756 L759.6 871 M756 874.6 V885.4" fill="none" stroke="#444" stroke-width="0.9"/>
 <rect x="745.3" y="874.6" width="10.7" height="10.8" fill="#a6c2e8" stroke="#444" stroke-width="0.9"/>
 <path d="M747.6 882.5 L753 878" stroke="#fff" stroke-width="2.6" stroke-linecap="round"/>
 <path d="M747.6 882.5 L753 878" stroke="#555" stroke-width="0.5" stroke-linecap="round"/>
 <path d="M763.4 876 h5.6 l-2.8 3.4z" fill="#2a2a2a"/>
 <!-- gauge icon -->
 <path d="M1292.7 870.5 A6.9 6.9 0 0 1 1299.6 877.4 V884.2 H1292.7 A6.9 6.9 0 0 1 1292.7 870.5 Z" fill="#000"/>
 <path d="M1288 878 L1296.8 874 V880.6 H1293.5 L1295.8 877.3 L1288.3 880.6 Z" fill="#fff"/>
</svg>
<!-- status bar -->
<div class="abs" style="left:0;top:894px;width:173px;height:12px;background:#808080"></div>
<div class="abs" style="left:173px;top:894px;width:469px;height:12px;background:#afafaf"></div>
<div class="abs" style="left:642px;top:894px;width:159px;height:12px;background:#808080"></div>
<div class="abs" style="left:801px;top:894px;width:162px;height:12px;background:#afafaf"></div>
<div class="abs" style="left:963px;top:894px;width:349px;height:12px;background:#6a9150"></div>
<div class="abs" style="left:1074px;top:894px;width:6px;height:12px;background:#000"></div>
<!-- cursor -->
<svg class="abs" style="left:667px;top:654px" width="14" height="22" viewBox="0 0 14 22"><path d="M1.5 1.5 V17.5 L4.8 14.3 L7.8 20.3 L10.5 19.2 L7.6 13.3 H13 Z" fill="#fff" stroke="#1a1a1a" stroke-width="1.05" stroke-linejoin="round"/></svg>

</body></html>
